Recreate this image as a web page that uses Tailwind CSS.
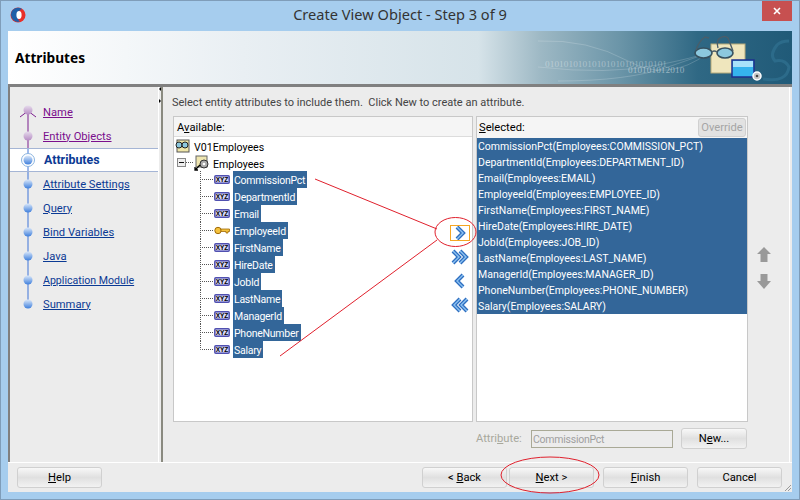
<!doctype html>
<html lang="en">
<head>
<meta charset="UTF-8" />
<title>Create View Object - Step 3 of 9</title>
<script src="https://cdn.jsdelivr.net/npm/@tailwindcss/browser@4"></script>
</head>
<body class="m-0">
<svg class="absolute w-0 h-0">
  <defs>
    <linearGradient id="dot-blue" x1="0" y1="0" x2="0" y2="1"><stop offset="0" stop-color="#dce9fa"/><stop offset="1" stop-color="#3f7fdc"/></linearGradient>
    <linearGradient id="dot-purple" x1="0" y1="0" x2="0" y2="1"><stop offset="0" stop-color="#e6dcec"/><stop offset="1" stop-color="#b68cc4"/></linearGradient>
  </defs>
</svg>
<div class="relative w-[800px] h-[500px] overflow-hidden flex flex-col bg-[#a6cdee] border border-[#7f9db9] font-['Roboto',sans-serif] text-[11.2px] text-black">

  <!-- Title bar -->
  <div class="relative h-[30px] shrink-0 flex items-center justify-center">
    <svg class="absolute left-[9px] top-[6px] w-4 h-4" viewBox="0 0 16 16">
      <circle cx="8" cy="8" r="7.5" fill="#e8302a"/>
      <path d="M1 8a7 7 0 0 0 9 6.6C7 13 6 4 12 2A7 7 0 0 0 1 8z" fill="#1f5fa8"/>
      <ellipse cx="9" cy="8" rx="2.6" ry="4" fill="#fff"/>
    </svg>
    <span class="font-['Noto_Sans',sans-serif] text-[14.6px] text-[#333] pb-[2px]">Create View Object - Step 3 of 9</span>
    <div class="absolute right-[7px] top-0 w-[30px] h-[20px] bg-[#c75050] flex items-center justify-center">
      <svg class="w-2 h-2" viewBox="0 0 8 8"><path d="M1 1l6 6M7 1L1 7" stroke="#fff" stroke-width="1.6"/></svg>
    </div>
  </div>

  <!-- Dialog body -->
  <div class="mx-[7px] w-[784px] h-[461px] flex flex-col bg-[#ececec]">

    <!-- Banner -->
    <div class="relative h-[53px] shrink-0 flex items-center pl-[7px] overflow-hidden bg-[linear-gradient(90deg,#ffffff_0%,#e9eff3_30%,#d6e3e9_60%,#9db8c4_68%,#6b95a8_78%,#2f6884_88%,#205a78_100%)]">
      <span class="font-['Noto_Sans',sans-serif] text-[13.7px] font-bold pt-[2px]">Attributes</span>
      <svg class="absolute left-[530px] top-0 w-[254px] h-[53px]" viewBox="0 0 254 53">
        <path d="M0 10Q50 8 90 30T170 22M0 36Q70 44 120 34T170 20M20 50Q90 50 130 36T172 22" fill="none" stroke="#fff" stroke-opacity=".18"/>
        <path d="M225 48q24 4 26-12-4-8-14-6-6-6 2-16 4-4 12-4" fill="none" stroke="#2c6b8a" stroke-width="3"/>
      </svg>
      <span class="absolute left-[537px] top-[27px] font-['Liberation_Serif',serif] text-[9.2px] tracking-[0.1px] text-white/35">01010101010101010101010101</span>
      <span class="absolute left-[620px] top-[33px] font-['Liberation_Serif',serif] text-[9.2px] tracking-[0.1px] text-white/45">010101012010</span>
      <svg class="absolute left-[684px] top-[2px] w-[72px] h-[50px]" viewBox="0 0 72 50">
        <rect x="19" y="11" width="34" height="29" fill="#efe6bd" stroke="#b5aa7a"/>
        <rect x="40" y="27" width="22" height="17" fill="#35b4ee" stroke="#1e2f8e" stroke-width="1.5"/>
        <rect x="41" y="28" width="20" height="6" fill="#a8e2fa"/>
        <circle cx="65" cy="43" r="4" fill="#c8c8c8" stroke="#fff" stroke-width="1.5"/>
        <circle cx="65" cy="43" r="1.3" fill="#444"/>
        <ellipse cx="11.500" cy="20" rx="8.500" ry="5" fill="#8cc8de" stroke="#37505e" stroke-width="1.6"/>
        <ellipse cx="33" cy="20" rx="8" ry="5" fill="#8cc8de" stroke="#37505e" stroke-width="1.6"/>
        <path d="M20 19q2-2 5 0M4 17q3-9 9-13l4 1M26 15q-2-8 2-10 5-3 8 0l5 13" fill="none" stroke="#4a5e6a" stroke-width="1.4"/>
      </svg>
    </div>
    <div class="h-[3px] shrink-0 bg-[#808080]"></div>

    <!-- Panels -->
    <div class="flex-1 flex min-h-0 border-b border-white">
      <!-- Wizard steps -->
      <div class="w-[150px] shrink-0 pt-[13px] border-l-2 border-[#808080]">
        <div class="h-6 flex items-center">
          <svg class="w-[33px] h-6 shrink-0" viewBox="0 0 33 24"><path d="M18 12v12M10 17l8-6 8 6" fill="none" stroke="#7b1f8e"/><circle cx="18" cy="10" r="4.5" fill="url(#dot-purple)"/></svg>
          <a class="underline text-[#7b0f8c] pt-[2px]">Name</a>
        </div>
        <div class="h-6 flex items-center">
          <svg class="w-[33px] h-6 shrink-0" viewBox="0 0 33 24"><path d="M18 0v24" stroke="#7b1f8e"/><circle cx="18" cy="12" r="4.5" fill="url(#dot-purple)"/></svg>
          <a class="underline text-[#7b0f8c] pt-[2px]">Entity Objects</a>
        </div>
        <div class="h-6 flex items-center bg-white border-y border-[#a5b5d5]">
          <svg class="w-[33px] h-[22px] shrink-0" viewBox="0 0 33 22"><path d="M18 0v22" stroke="#3f75d8"/><circle cx="18" cy="11" r="6.5" fill="#fff" stroke="#8ab4e0"/><circle cx="18" cy="11" r="4.5" fill="url(#dot-blue)"/></svg>
          <span class="font-bold text-[12.4px] text-[#0b3a94] pl-[1px]">Attributes</span>
        </div>
        <div class="h-6 flex items-center">
          <svg class="w-[33px] h-6 shrink-0" viewBox="0 0 33 24"><path d="M18 0v24" stroke="#3f75d8"/><circle cx="18" cy="12" r="4.5" fill="url(#dot-blue)"/></svg>
          <a class="underline text-[#0b3a94] pt-[2px]">Attribute Settings</a>
        </div>
        <div class="h-6 flex items-center">
          <svg class="w-[33px] h-6 shrink-0" viewBox="0 0 33 24"><path d="M18 0v24" stroke="#3f75d8"/><circle cx="18" cy="12" r="4.5" fill="url(#dot-blue)"/></svg>
          <a class="underline text-[#0b3a94] pt-[2px]">Query</a>
        </div>
        <div class="h-6 flex items-center">
          <svg class="w-[33px] h-6 shrink-0" viewBox="0 0 33 24"><path d="M18 0v24" stroke="#3f75d8"/><circle cx="18" cy="12" r="4.5" fill="url(#dot-blue)"/></svg>
          <a class="underline text-[#0b3a94] pt-[2px]">Bind Variables</a>
        </div>
        <div class="h-6 flex items-center">
          <svg class="w-[33px] h-6 shrink-0" viewBox="0 0 33 24"><path d="M18 0v24" stroke="#3f75d8"/><circle cx="18" cy="12" r="4.5" fill="url(#dot-blue)"/></svg>
          <a class="underline text-[#0b3a94] pt-[2px]">Java</a>
        </div>
        <div class="h-6 flex items-center">
          <svg class="w-[33px] h-6 shrink-0" viewBox="0 0 33 24"><path d="M18 0v24" stroke="#3f75d8"/><circle cx="18" cy="12" r="4.5" fill="url(#dot-blue)"/></svg>
          <a class="underline text-[#0b3a94] pt-[2px] text-[10.6px]">Application Module</a>
        </div>
        <div class="h-6 flex items-center">
          <svg class="w-[33px] h-6 shrink-0" viewBox="0 0 33 24"><path d="M18 0v12" stroke="#3f75d8"/><circle cx="18" cy="12" r="4.5" fill="url(#dot-blue)"/></svg>
          <a class="underline text-[#0b3a94] pt-[2px]">Summary</a>
        </div>
      </div>

      <!-- Splitter -->
      <div class="w-[5px] shrink-0 relative bg-[#ececec] border-l border-white border-r-2 border-r-[#8a8a80]">
        <span class="absolute left-0 top-0 w-0 h-0 border-y-[2px] border-y-transparent border-r-[2px] border-r-black"></span>
        <span class="absolute left-0 top-[12px] w-0 h-0 border-y-[2px] border-y-transparent border-l-[2px] border-l-black"></span>
      </div>

      <!-- Main panel -->
      <div class="flex-1 min-w-0 flex flex-col pl-[10px] mr-[2px] border-r border-white">
        <div class="h-[29px] shrink-0 pt-[8px] -ml-[1px] text-[11px] text-[#444]">Select entity attributes to include them.&nbsp; Click New to create an attribute.</div>
        <div class="flex h-[306px] shrink-0">

          <!-- Available -->
          <div class="w-[300px] shrink-0 border border-[#c8c8c8] bg-white flex flex-col">
            <div class="h-[20px] shrink-0 pl-[3px] pt-[3px] flex items-center bg-[#f5f5f5] border-b border-[#dcdcdc]"><span>A<u>v</u>ailable:</span></div>
            <div>
              <div class="h-[17px] flex items-center">
                <svg class="w-[16px] h-[14px] shrink-0" viewBox="0 0 16 14"><rect x="3" y="1" width="12" height="12" fill="#efe6a8" stroke="#555"/><circle cx="5" cy="6" r="3" fill="#8cc8de" stroke="#222"/><circle cx="11" cy="6" r="3" fill="#8cc8de" stroke="#222"/></svg>
                <span class="ml-[4px] pt-[4px] text-[10.6px]">V01Employees</span>
              </div>
              <div class="h-[17px] flex items-center">
                <svg class="w-[38px] h-[17px] shrink-0" viewBox="0 0 38 17"><rect x="3.500" y="4.500" width="8" height="8" fill="#eee" stroke="#888"/><path d="M5 8.500h5" stroke="#111"/><path d="M12 8.500h8" stroke="#555" stroke-dasharray="1 1"/><rect x="22" y="2" width="11" height="11" fill="#efe6b0" stroke="#666"/><circle cx="30" cy="10" r="4" fill="#aaa" stroke="#333"/><circle cx="30" cy="10" r="1.300" fill="#fff"/><path d="M21 16l5-5M21 13v3h3" fill="none" stroke="#000" stroke-width="1.300"/></svg>
                <span class="ml-[1px] pt-[4px] text-[10.6px]">Employees</span>
              </div>
              <div class="h-[17px] flex items-stretch pl-[26px]">
                <svg class="w-[14px] h-[17px] shrink-0" viewBox="0 0 14 17"><path d="M.500 0v17M0 8.500h14" stroke="#555" stroke-dasharray="1 1"/></svg>
                <svg class="w-[16px] h-[17px] shrink-0" viewBox="0 0 16 17"><rect x=".800" y="4.800" width="14.400" height="7.400" rx="1" fill="#d8d8f8" stroke="#5050b0" stroke-width="1.500"/><text x="8" y="11" text-anchor="middle" font-size="6.500" font-weight="700" font-family="Liberation Sans,sans-serif">XYZ</text></svg>
                <span class="ml-[3px] pl-[1px] pr-[2px] text-[10.5px] tracking-[-0.25px] leading-[19px] bg-[#336699] text-white">CommissionPct</span>
              </div>
              <div class="h-[17px] flex items-stretch pl-[26px]">
                <svg class="w-[14px] h-[17px] shrink-0" viewBox="0 0 14 17"><path d="M.500 0v17M0 8.500h14" stroke="#555" stroke-dasharray="1 1"/></svg>
                <svg class="w-[16px] h-[17px] shrink-0" viewBox="0 0 16 17"><rect x=".800" y="4.800" width="14.400" height="7.400" rx="1" fill="#d8d8f8" stroke="#5050b0" stroke-width="1.500"/><text x="8" y="11" text-anchor="middle" font-size="6.500" font-weight="700" font-family="Liberation Sans,sans-serif">XYZ</text></svg>
                <span class="ml-[3px] pl-[1px] pr-[2px] text-[10.5px] tracking-[-0.25px] leading-[19px] bg-[#336699] text-white">DepartmentId</span>
              </div>
              <div class="h-[17px] flex items-stretch pl-[26px]">
                <svg class="w-[14px] h-[17px] shrink-0" viewBox="0 0 14 17"><path d="M.500 0v17M0 8.500h14" stroke="#555" stroke-dasharray="1 1"/></svg>
                <svg class="w-[16px] h-[17px] shrink-0" viewBox="0 0 16 17"><rect x=".800" y="4.800" width="14.400" height="7.400" rx="1" fill="#d8d8f8" stroke="#5050b0" stroke-width="1.500"/><text x="8" y="11" text-anchor="middle" font-size="6.500" font-weight="700" font-family="Liberation Sans,sans-serif">XYZ</text></svg>
                <span class="ml-[3px] pl-[1px] pr-[2px] text-[10.5px] tracking-[-0.25px] leading-[19px] bg-[#336699] text-white">Email</span>
              </div>
              <div class="h-[17px] flex items-stretch pl-[26px]">
                <svg class="w-[14px] h-[17px] shrink-0" viewBox="0 0 14 17"><path d="M.500 0v17M0 8.500h14" stroke="#555" stroke-dasharray="1 1"/></svg>
                <svg class="w-[16px] h-[17px] shrink-0" viewBox="0 0 16 17"><circle cx="4" cy="8.500" r="3.200" fill="#f5c23c" stroke="#a06a08"/><path d="M7 7h8.500v2.500H14V11h-2V9.500H7z" fill="#f5c23c" stroke="#a06a08" stroke-width=".8"/></svg>
                <span class="ml-[3px] pl-[1px] pr-[2px] text-[10.5px] tracking-[-0.25px] leading-[19px] bg-[#336699] text-white">EmployeeId</span>
              </div>
              <div class="h-[17px] flex items-stretch pl-[26px]">
                <svg class="w-[14px] h-[17px] shrink-0" viewBox="0 0 14 17"><path d="M.500 0v17M0 8.500h14" stroke="#555" stroke-dasharray="1 1"/></svg>
                <svg class="w-[16px] h-[17px] shrink-0" viewBox="0 0 16 17"><rect x=".800" y="4.800" width="14.400" height="7.400" rx="1" fill="#d8d8f8" stroke="#5050b0" stroke-width="1.500"/><text x="8" y="11" text-anchor="middle" font-size="6.500" font-weight="700" font-family="Liberation Sans,sans-serif">XYZ</text></svg>
                <span class="ml-[3px] pl-[1px] pr-[2px] text-[10.5px] tracking-[-0.25px] leading-[19px] bg-[#336699] text-white">FirstName</span>
              </div>
              <div class="h-[17px] flex items-stretch pl-[26px]">
                <svg class="w-[14px] h-[17px] shrink-0" viewBox="0 0 14 17"><path d="M.500 0v17M0 8.500h14" stroke="#555" stroke-dasharray="1 1"/></svg>
                <svg class="w-[16px] h-[17px] shrink-0" viewBox="0 0 16 17"><rect x=".800" y="4.800" width="14.400" height="7.400" rx="1" fill="#d8d8f8" stroke="#5050b0" stroke-width="1.500"/><text x="8" y="11" text-anchor="middle" font-size="6.500" font-weight="700" font-family="Liberation Sans,sans-serif">XYZ</text></svg>
                <span class="ml-[3px] pl-[1px] pr-[2px] text-[10.5px] tracking-[-0.25px] leading-[19px] bg-[#336699] text-white">HireDate</span>
              </div>
              <div class="h-[17px] flex items-stretch pl-[26px]">
                <svg class="w-[14px] h-[17px] shrink-0" viewBox="0 0 14 17"><path d="M.500 0v17M0 8.500h14" stroke="#555" stroke-dasharray="1 1"/></svg>
                <svg class="w-[16px] h-[17px] shrink-0" viewBox="0 0 16 17"><rect x=".800" y="4.800" width="14.400" height="7.400" rx="1" fill="#d8d8f8" stroke="#5050b0" stroke-width="1.500"/><text x="8" y="11" text-anchor="middle" font-size="6.500" font-weight="700" font-family="Liberation Sans,sans-serif">XYZ</text></svg>
                <span class="ml-[3px] pl-[1px] pr-[2px] text-[10.5px] tracking-[-0.25px] leading-[19px] bg-[#336699] text-white">JobId</span>
              </div>
              <div class="h-[17px] flex items-stretch pl-[26px]">
                <svg class="w-[14px] h-[17px] shrink-0" viewBox="0 0 14 17"><path d="M.500 0v17M0 8.500h14" stroke="#555" stroke-dasharray="1 1"/></svg>
                <svg class="w-[16px] h-[17px] shrink-0" viewBox="0 0 16 17"><rect x=".800" y="4.800" width="14.400" height="7.400" rx="1" fill="#d8d8f8" stroke="#5050b0" stroke-width="1.500"/><text x="8" y="11" text-anchor="middle" font-size="6.500" font-weight="700" font-family="Liberation Sans,sans-serif">XYZ</text></svg>
                <span class="ml-[3px] pl-[1px] pr-[2px] text-[10.5px] tracking-[-0.25px] leading-[19px] bg-[#336699] text-white">LastName</span>
              </div>
              <div class="h-[17px] flex items-stretch pl-[26px]">
                <svg class="w-[14px] h-[17px] shrink-0" viewBox="0 0 14 17"><path d="M.500 0v17M0 8.500h14" stroke="#555" stroke-dasharray="1 1"/></svg>
                <svg class="w-[16px] h-[17px] shrink-0" viewBox="0 0 16 17"><rect x=".800" y="4.800" width="14.400" height="7.400" rx="1" fill="#d8d8f8" stroke="#5050b0" stroke-width="1.500"/><text x="8" y="11" text-anchor="middle" font-size="6.500" font-weight="700" font-family="Liberation Sans,sans-serif">XYZ</text></svg>
                <span class="ml-[3px] pl-[1px] pr-[2px] text-[10.5px] tracking-[-0.25px] leading-[19px] bg-[#336699] text-white">ManagerId</span>
              </div>
              <div class="h-[17px] flex items-stretch pl-[26px]">
                <svg class="w-[14px] h-[17px] shrink-0" viewBox="0 0 14 17"><path d="M.500 0v17M0 8.500h14" stroke="#555" stroke-dasharray="1 1"/></svg>
                <svg class="w-[16px] h-[17px] shrink-0" viewBox="0 0 16 17"><rect x=".800" y="4.800" width="14.400" height="7.400" rx="1" fill="#d8d8f8" stroke="#5050b0" stroke-width="1.500"/><text x="8" y="11" text-anchor="middle" font-size="6.500" font-weight="700" font-family="Liberation Sans,sans-serif">XYZ</text></svg>
                <span class="ml-[3px] pl-[1px] pr-[2px] text-[10.5px] tracking-[-0.25px] leading-[19px] bg-[#336699] text-white">PhoneNumber</span>
              </div>
              <div class="h-[17px] flex items-stretch pl-[26px]">
                <svg class="w-[14px] h-[17px] shrink-0" viewBox="0 0 14 17"><path d="M.500 0v8.500H14" fill="none" stroke="#555" stroke-dasharray="1 1"/></svg>
                <svg class="w-[16px] h-[17px] shrink-0" viewBox="0 0 16 17"><rect x=".800" y="4.800" width="14.400" height="7.400" rx="1" fill="#d8d8f8" stroke="#5050b0" stroke-width="1.500"/><text x="8" y="11" text-anchor="middle" font-size="6.500" font-weight="700" font-family="Liberation Sans,sans-serif">XYZ</text></svg>
                <span class="ml-[3px] pl-[1px] pr-[2px] text-[10.5px] tracking-[-0.25px] leading-[19px] bg-[#336699] text-white">Salary</span>
              </div>
            </div>
          </div>

          <!-- Shuttle buttons -->
          <div class="w-[3px] shrink-0"></div>
          <div class="w-[0px] relative">
            <div class="absolute right-[6px] top-[109px] w-[20px] flex flex-col items-center gap-[8px]">
              <div class="w-[20px] h-[16px] border border-[#f5a623] flex items-center justify-center">
                <svg class="w-[14px] h-[14px]" viewBox="0 0 14 14"><path d="M4 1l6 6-6 6" fill="none" stroke="#2f6fc0" stroke-width="4"/><path d="M4 1l6 6-6 6" fill="none" stroke="#8cc2f2" stroke-width="1.400"/></svg>
              </div>
              <svg class="w-[18px] h-[16px]" viewBox="0 0 18 16"><path d="M2 2l6 6-6 6M9 2l6 6-6 6" fill="none" stroke="#2f6fc0" stroke-width="4"/><path d="M2 2l6 6-6 6M9 2l6 6-6 6" fill="none" stroke="#8cc2f2" stroke-width="1.400"/></svg>
              <svg class="w-[14px] h-[16px]" viewBox="0 0 14 16"><path d="M10 2L4 8l6 6" fill="none" stroke="#2f6fc0" stroke-width="4"/><path d="M10 2L4 8l6 6" fill="none" stroke="#8cc2f2" stroke-width="1.400"/></svg>
              <svg class="w-[18px] h-[16px]" viewBox="0 0 18 16"><path d="M9 2L3 8l6 6M16 2l-6 6 6 6" fill="none" stroke="#2f6fc0" stroke-width="4"/><path d="M9 2L3 8l6 6M16 2l-6 6 6 6" fill="none" stroke="#8cc2f2" stroke-width="1.400"/></svg>
            </div>
          </div>

          <!-- Selected -->
          <div class="w-[272px] shrink-0 border border-[#c8c8c8] bg-white flex flex-col">
            <div class="h-[21px] shrink-0 pl-[2px] flex items-center justify-between bg-[#f5f5f5]">
              <span class="pt-[2px]"><u>S</u>elected:</span>
              <span class="h-[19px] w-[48px] mr-[1px] pt-[1px] flex items-center justify-center rounded-[3px] border border-[#d0d0d0] bg-[#e2e2e2] text-[#a5a5a5]">Override</span>
            </div>
            <div class="bg-[#336699] text-white pl-[1px] text-[10.5px]">
              <div class="h-4 leading-[18px]">CommissionPct(Employees:COMMISSION_PCT)</div>
              <div class="h-4 leading-[18px]">DepartmentId(Employees:DEPARTMENT_ID)</div>
              <div class="h-4 leading-[18px]">Email(Employees:EMAIL)</div>
              <div class="h-4 leading-[18px]">EmployeeId(Employees:EMPLOYEE_ID)</div>
              <div class="h-4 leading-[18px]">FirstName(Employees:FIRST_NAME)</div>
              <div class="h-4 leading-[18px]">HireDate(Employees:HIRE_DATE)</div>
              <div class="h-4 leading-[18px]">JobId(Employees:JOB_ID)</div>
              <div class="h-4 leading-[18px]">LastName(Employees:LAST_NAME)</div>
              <div class="h-4 leading-[18px]">ManagerId(Employees:MANAGER_ID)</div>
              <div class="h-4 leading-[18px]">PhoneNumber(Employees:PHONE_NUMBER)</div>
              <div class="h-4 leading-[18px]">Salary(Employees:SALARY)</div>
            </div>
          </div>

          <!-- Reorder -->
          <div class="w-[32px] shrink-0 flex flex-col items-center gap-[12px] pt-[131px]">
            <svg class="w-[14px] h-[15px]" viewBox="0 0 14 15"><path d="M7 0l7 7h-3.500v8h-7V7H0z" fill="#999"/></svg>
            <svg class="w-[14px] h-[15px]" viewBox="0 0 14 15"><path d="M3.500 0h7v7H14l-7 8-7-8h3.500z" fill="#999"/></svg>
          </div>
        </div>

        <!-- Attribute row -->
        <div class="flex items-center h-[21px] mt-[6px] ml-[303px] pr-[42px]">
          <span class="w-[55px] shrink-0 pt-[2px] text-[#a8a89c]">Attri<u>b</u>ute:</span>
          <div class="w-[142px] h-[18px] shrink-0 px-[1px] text-[10.5px] tracking-[-0.25px] leading-[18px] border border-[#a9a996] text-[#a0a0a0]">CommissionPct</div>
          <button class="ml-[8px] w-[67px] h-[21px] pt-[1px] rounded-[3px] border border-[#d0d0d0] bg-[linear-gradient(#f8f8f8,#e0e0e0_50%,#f2f2f2)]">N<u>e</u>w...</button>
        </div>
      </div>
    </div>

    <!-- Footer -->
    <div class="h-[29px] shrink-0 flex items-start pt-[4px] pl-[9px]">
      <button class="w-[85px] h-[21px] pt-[1px] rounded-[3px] border border-[#d0d0d0] bg-[linear-gradient(#f8f8f8,#e0e0e0_50%,#f2f2f2)]"><u>H</u>elp</button>
      <button class="ml-[320px] w-[85px] h-[21px] pt-[1px] rounded-[3px] border border-[#d0d0d0] bg-[linear-gradient(#f8f8f8,#e0e0e0_50%,#f2f2f2)]">&lt; <u>B</u>ack</button>
      <button class="ml-[2px] w-[85px] h-[21px] pt-[1px] rounded-[3px] border border-[#d0d0d0] bg-[linear-gradient(#f8f8f8,#e0e0e0_50%,#f2f2f2)]"><u>N</u>ext &gt;</button>
      <button class="ml-[9px] w-[85px] h-[21px] pt-[1px] rounded-[3px] border border-[#d0d0d0] bg-[linear-gradient(#f8f8f8,#e0e0e0_50%,#f2f2f2)]"><u>F</u>inish</button>
      <button class="ml-[9px] w-[85px] h-[21px] pt-[1px] rounded-[3px] border border-[#d0d0d0] bg-[linear-gradient(#f8f8f8,#e0e0e0_50%,#f2f2f2)]">Cancel</button>
    </div>
  </div>

  <!-- Red annotations drawn over the dialog -->
  <svg class="absolute left-[-1px] top-[-1px] w-[800px] h-[500px] pointer-events-none" viewBox="0 0 800 500">
    <path d="M315 179L437 229M280 356L437 240" fill="none" stroke="#e0202c"/>
    <ellipse cx="455.500" cy="232" rx="20.500" ry="14.500" fill="none" stroke="#e0202c"/>
    <ellipse cx="550" cy="475" rx="49" ry="18" fill="none" stroke="#e0202c"/>
    <path d="M785 491l6-6M788 491l3-3" stroke="#999" fill="none"/>
  </svg>
</div>
</body>
</html>
